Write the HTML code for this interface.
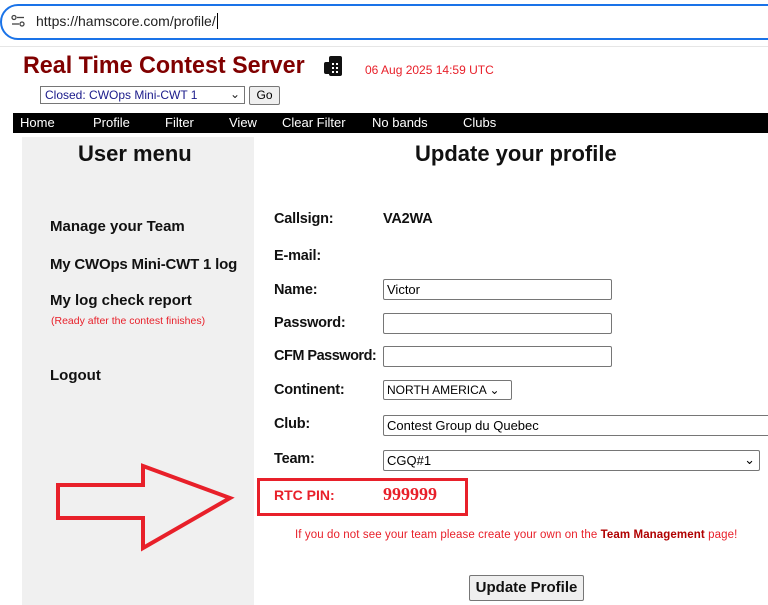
<!DOCTYPE html>
<html><head><style>
*{margin:0;padding:0;box-sizing:border-box}
body{width:768px;height:605px;background:#fff;position:relative;overflow:hidden;font-family:"Liberation Sans",sans-serif}
.a{position:absolute}
.url{left:0;top:4px;width:790px;height:36px;border:2px solid #1a73e8;border-radius:18px;}
.lbl{font-weight:bold;font-size:14.5px;color:#111;letter-spacing:-0.2px}
.inp{position:absolute;border:1px solid #767676;border-radius:2px;background:#fff;font-size:13px;padding:1px 3px;height:21px;line-height:17px;color:#000}
.nav span{position:absolute;top:2px;color:#fff;font-size:13px}
.menu{font-weight:bold;font-size:15px;color:#111;left:50px}
</style></head><body>
<div class="a url"></div>
<svg class="a" style="left:11px;top:14px" width="14" height="14" viewBox="0 0 14 14"><circle cx="3" cy="3.5" r="2" fill="none" stroke="#444" stroke-width="1.3"/><line x1="6" y1="3.5" x2="13" y2="3.5" stroke="#444" stroke-width="1.3"/><line x1="1" y1="10" x2="8" y2="10" stroke="#444" stroke-width="1.3"/><circle cx="11" cy="10" r="2" fill="none" stroke="#444" stroke-width="1.3"/></svg>
<div class="a" style="left:36px;top:13px;font-size:14px;color:#222">https://hamscore.com/profile/<span style="border-left:1px solid #000;margin-left:1px"></span></div>
<div class="a" style="left:0;top:46px;width:768px;height:1px;background:#e6e6e6"></div>
<div class="a" style="left:23px;top:52px;font-size:24px;font-weight:bold;color:#800000;white-space:nowrap;transform:scaleX(0.97);transform-origin:left">Real Time Contest Server</div>
<svg class="a" style="left:323px;top:55px" width="22" height="22" viewBox="0 0 22 22"><rect x="6" y="1" width="13" height="20" rx="2" fill="#111"/><rect x="1" y="7" width="8" height="12" rx="2" fill="#111"/><g fill="#fff"><rect x="9" y="8" width="2" height="2"/><rect x="13" y="8" width="2" height="2"/><rect x="9" y="12" width="2" height="2"/><rect x="13" y="12" width="2" height="2"/><rect x="9" y="16" width="2" height="2"/><rect x="13" y="16" width="2" height="2"/></g></svg>
<div class="a" style="left:365px;top:63px;font-size:12px;color:#e8202a">06 Aug 2025 14:59 UTC</div>
<div class="a" style="left:40px;top:86px;width:205px;height:18px;border:1px solid #767676;font-size:12px;color:#1a1a8a;padding:1px 4px;background:#fff">Closed: CWOps Mini-CWT 1<span style="position:absolute;right:4px;top:0;color:#222">⌄</span></div>
<div class="a" style="left:249px;top:86px;width:31px;height:19px;border:1px solid #767676;border-radius:2px;background:#efefef;font-size:12px;text-align:center;line-height:17px">Go</div>
<div class="a nav" style="left:13px;top:113px;width:760px;height:20px;background:#000">
<span style="left:7px">Home</span><span style="left:80px">Profile</span><span style="left:152px">Filter</span><span style="left:216px">View</span><span style="left:269px">Clear Filter</span><span style="left:359px">No bands</span><span style="left:450px">Clubs</span></div>
<div class="a" style="left:22px;top:137px;width:232px;height:468px;background:#f0f0f0"></div>
<div class="a" style="left:78px;top:141px;font-size:22px;font-weight:bold;color:#111">User menu</div>
<div class="a menu" style="top:218px">Manage your Team</div>
<div class="a menu" style="top:256px;letter-spacing:-0.2px">My CWOps Mini-CWT 1 log</div>
<div class="a menu" style="top:292px">My log check report</div>
<div class="a" style="left:51px;top:315px;font-size:10.5px;color:#e8202a">(Ready after the contest finishes)</div>
<div class="a menu" style="top:367px">Logout</div>
<div class="a" style="left:415px;top:141px;font-size:22px;font-weight:bold;color:#111">Update your profile</div>
<div class="a lbl" style="left:274px;top:211px">Callsign:</div>
<div class="a lbl" style="left:383px;top:211px">VA2WA</div>
<div class="a lbl" style="left:274px;top:248px">E-mail:</div>
<div class="a lbl" style="left:274px;top:282px">Name:</div>
<div class="inp" style="left:383px;top:279px;width:229px">Victor</div>
<div class="a lbl" style="left:274px;top:315px">Password:</div>
<div class="inp" style="left:383px;top:313px;width:229px"></div>
<div class="a lbl" style="left:274px;top:348px;letter-spacing:-0.5px">CFM Password:</div>
<div class="inp" style="left:383px;top:346px;width:229px"></div>
<div class="a lbl" style="left:274px;top:382px">Continent:</div>
<div class="inp" style="left:383px;top:380px;width:129px;height:20px;font-size:12px;line-height:16px">NORTH AMERICA ⌄</div>
<div class="a lbl" style="left:274px;top:416px">Club:</div>
<div class="inp" style="left:383px;top:415px;width:400px">Contest Group du Quebec</div>
<div class="a lbl" style="left:274px;top:451px">Team:</div>
<div class="inp" style="left:383px;top:450px;width:377px">CGQ#1<span style="position:absolute;right:4px;top:0">⌄</span></div>
<div class="a" style="left:257px;top:478px;width:211px;height:38px;border:3px solid #e8202a"></div>
<div class="a" style="left:274px;top:487px;font-size:14px;font-weight:bold;color:#e8202a">RTC PIN:</div>
<div class="a" style="left:383px;top:484px;font-size:18px;font-weight:bold;color:#e8202a;font-family:'Liberation Serif',serif">999999</div>
<svg class="a" style="left:0;top:0" width="260" height="605"><polygon points="58,485 143,485 143,466 230,498 143,548 143,518 58,518" fill="none" stroke="#e8202a" stroke-width="4"/></svg>
<div class="a" style="left:295px;top:529px;font-size:11.5px;color:#e8202a;white-space:nowrap;letter-spacing:0.1px">If you do not see your team please create your own on the <b style="color:#b00000">Team Management</b> page!</div>
<div class="a" style="left:469px;top:575px;width:115px;height:26px;border:1px solid #767676;border-radius:2px;background:#efefef;font-size:15px;font-weight:bold;text-align:center;line-height:24px;color:#111">Update Profile</div>
</body></html>
